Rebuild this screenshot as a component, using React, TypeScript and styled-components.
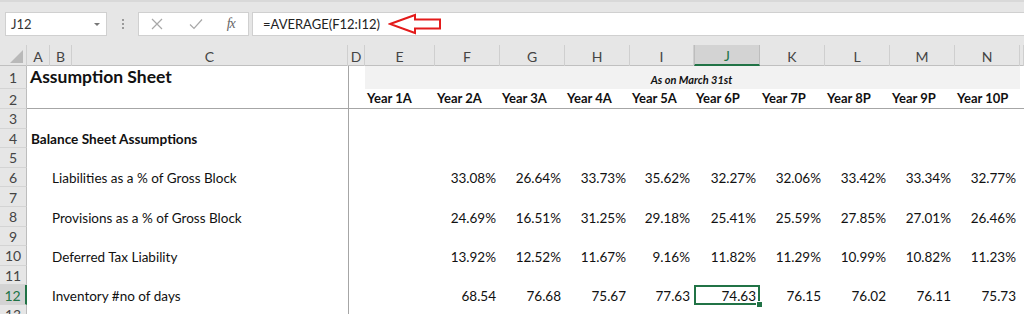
import React from "react";
import styled, { createGlobalStyle, css } from "styled-components";

const GREEN = "#217346";
const FONT = `Lato, "Noto Sans", sans-serif`;

const Global = createGlobalStyle`
  html, body { margin: 0; padding: 0; background: #fff; }
  body { font-family: ${FONT}; width: 1024px; height: 314px; overflow: hidden; }
`;

const COLS = "27px 23px 22px 276px 17px 70px 65px 65px 65px 64px 66px 65px 65px 65px 65px 1fr";

const Page = styled.div`
  width: 1024px;
  height: 314px;
  display: flex;
  flex-direction: column;
  overflow: hidden;
`;

/* ---------- formula bar ---------- */
const Toolbar = styled.div`
  flex: none;
  height: 45px;
  box-sizing: border-box;
  background: #e6e6e6;
  border-top: 2px solid #d9d9d9;
  display: flex;
  align-items: flex-start;
  padding: 10px 0 0 5px;
`;

const NameBox = styled.div`
  width: 102px;
  height: 24px;
  box-sizing: border-box;
  background: #fff;
  border: 1px solid #d0d0d0;
  display: flex;
  align-items: center;
  justify-content: space-between;
  padding: 0 6px 0 5px;
  font-size: 13px;
  color: #333;
`;

const Caret = styled.span`
  width: 0;
  height: 0;
  border-left: 3px solid transparent;
  border-right: 3px solid transparent;
  border-top: 3px solid #777;
`;

const Grip = styled.div`
  width: 31px;
  height: 24px;
  display: flex;
  flex-direction: column;
  align-items: center;
  justify-content: center;
  gap: 2px;
  & > span { width: 2px; height: 2px; background: #9a9a9a; }
`;

const ButtonBox = styled.div`
  width: 111px;
  height: 24px;
  box-sizing: border-box;
  background: #fff;
  border: 1px solid #d0d0d0;
  display: flex;
  align-items: center;
  padding-left: 12px;
`;

const IconSlot = styled.span`
  width: 37px;
  display: flex;
  align-items: center;
  justify-content: center;
  &:first-child { justify-content: flex-start; width: 30px; }
`;

const Fx = styled.span`
  font-family: "Liberation Serif", serif;
  font-style: italic;
  font-size: 14px;
  color: #666;
  letter-spacing: -1px;
`;

const FormulaBox = styled.div`
  position: relative;
  flex: 1;
  margin-left: 3px;
  height: 24px;
  box-sizing: border-box;
  background: #fff;
  border: 1px solid #d0d0d0;
  border-right: none;
  display: flex;
  align-items: center;
  padding-left: 10px;
  font-size: 13px;
  color: #222;
`;

const Arrow = styled.svg`
  position: absolute;
  left: 135px;
  top: 0px;
`;

/* ---------- sheet ---------- */
const Row = styled.div<{ $h: number; $ruled?: boolean }>`
  display: grid;
  grid-template-columns: ${COLS};
  height: ${(p) => p.$h}px;
  flex: none;
  ${(p) =>
    p.$ruled &&
    css`
      & > *:not(:first-child) { border-bottom: 1px solid #a6a6a6; }
    `}
`;

const HeaderRow = styled(Row)`
  background: #e6e6e6;
  border-bottom: 1px solid #c0c0c0;
  box-sizing: border-box;
`;

const Corner = styled.div`
  position: relative;
  border-right: 1px solid #cfcfcf;
  &::after {
    content: "";
    position: absolute;
    right: 3px;
    bottom: 3px;
    width: 0;
    height: 0;
    border-left: 13px solid transparent;
    border-bottom: 13px solid #b9b9b9;
  }
`;

const ColHead = styled.div<{ $sel?: boolean }>`
  display: flex;
  align-items: center;
  justify-content: center;
  font-size: 14px;
  color: #444;
  border-right: 1px solid #cfcfcf;
  box-sizing: border-box;
  padding-top: 2px;
  ${(p) =>
    p.$sel &&
    css`
      background: #d3d3d3;
      color: ${GREEN};
      border-bottom: 2px solid ${GREEN};
      border-right-color: #bdbdbd;
      border-left: 1px solid #bdbdbd;
    `}
`;

const RowHead = styled.div<{ $sel?: boolean }>`
  background: #e6e6e6;
  border-right: 1px solid #bdbdbd;
  border-bottom: 1px solid #d4d4d4;
  box-sizing: border-box;
  display: flex;
  align-items: center;
  justify-content: center;
  font-size: 14px;
  color: #444;
  padding-top: 1px;
  ${(p) =>
    p.$sel &&
    css`
      background: #d3d3d3;
      color: ${GREEN};
      border-right: 2px solid ${GREEN};
    `}
`;

const Cell = styled.div<{ $span?: number; $align?: "left" | "right" | "center"; $sel?: boolean }>`
  position: relative;
  grid-column: span ${(p) => p.$span ?? 1};
  display: flex;
  align-items: flex-end;
  justify-content: ${(p) => (p.$align === "right" ? "flex-end" : p.$align === "center" ? "center" : "flex-start")};
  padding: 0 4px 1px 2px;
  box-sizing: border-box;
  white-space: nowrap;
  font-size: 13.5px;
  color: #111;
  min-width: 0;
  ${(p) =>
    p.$sel &&
    css`
      outline: 2px solid ${GREEN};
      outline-offset: -2px;
    `}
`;

const Handle = styled.span`
  position: absolute;
  right: -3px;
  bottom: -3px;
  width: 5px;
  height: 5px;
  background: ${GREEN};
  border: 1px solid #fff;
`;

const DCell = styled.div`
  border-left: 1px solid #a6a6a6;
`;

const Title = styled(Cell)`
  font-size: 17.5px;
  font-weight: 700;
  padding-left: 3px;
  padding-bottom: 2px;
  overflow: visible;
`;

const Section = styled(Cell)`
  font-size: 13.6px;
  font-weight: 700;
  padding-left: 4px;
  overflow: visible;
`;

const Banner = styled(Cell)`
  background: #f2f2f2;
  font-size: 11px;
  font-weight: 700;
  font-style: italic;
  padding-bottom: 3px;
`;

const YearCell = styled(Cell)`
  font-size: 13px;
  font-weight: 700;
  padding-bottom: 2px;
`;

const Label = styled(Cell)`
  overflow: visible;
`;

const Body = styled.div`
  flex: none;
  display: flex;
  flex-direction: column;
`;

const letters = ["A", "B", "C", "D", "E", "F", "G", "H", "I", "J", "K", "L", "M", "N"];
const years = ["Year 1A", "Year 2A", "Year 3A", "Year 4A", "Year 5A", "Year 6P", "Year 7P", "Year 8P", "Year 9P", "Year 10P"];

const data: { row: number; label: string; values: string[] }[] = [
  { row: 6, label: "Liabilities as a % of Gross Block", values: ["33.08%", "26.64%", "33.73%", "35.62%", "32.27%", "32.06%", "33.42%", "33.34%", "32.77%"] },
  { row: 8, label: "Provisions as a % of Gross Block", values: ["24.69%", "16.51%", "31.25%", "29.18%", "25.41%", "25.59%", "27.85%", "27.01%", "26.46%"] },
  { row: 10, label: "Deferred Tax Liability", values: ["13.92%", "12.52%", "11.67%", "9.16%", "11.82%", "11.29%", "10.99%", "10.82%", "11.23%"] },
  { row: 12, label: "Inventory #no of days", values: ["68.54", "76.68", "75.67", "77.63", "74.63", "76.15", "76.02", "76.11", "75.73"] },
];

const RH = 19.6;

function EmptyRow({ n }: { n: number }) {
  return (
    <Row $h={RH}>
      <RowHead>{n}</RowHead>
      <Cell $span={3} />
      <DCell />
    </Row>
  );
}

function Cross() {
  return (
    <svg width="12" height="12" viewBox="0 0 12 12">
      <path d="M1 1 L11 11 M11 1 L1 11" stroke="#a8a8a8" strokeWidth="1.2" fill="none" />
    </svg>
  );
}

function Check() {
  return (
    <svg width="14" height="12" viewBox="0 0 14 12">
      <path d="M1 6.5 L5 10.5 L13 1.5" stroke="#a8a8a8" strokeWidth="1.2" fill="none" />
    </svg>
  );
}

export default function App() {
  const rows: React.ReactNode[] = [];
  rows.push(
    <Row key="r1" $h={23.4}>
      <RowHead>1</RowHead>
      <Title $span={3}>Assumption Sheet</Title>
      <DCell />
      <Banner $span={10} $align="center">As on March 31st</Banner>
    </Row>
  );
  rows.push(
    <Row key="r2" $h={19.6} $ruled>
      <RowHead>2</RowHead>
      <Cell $span={3} />
      <DCell />
      {years.map((y) => (
        <YearCell key={y}>{y}</YearCell>
      ))}
      <Cell />
    </Row>
  );
  rows.push(<EmptyRow key="r3" n={3} />);
  rows.push(
    <Row key="r4" $h={RH}>
      <RowHead>4</RowHead>
      <Section $span={3}>Balance Sheet Assumptions</Section>
      <DCell />
    </Row>
  );
  let r = 5;
  data.forEach((d) => {
    while (r < d.row) {
      rows.push(<EmptyRow key={"e" + r} n={r} />);
      r++;
    }
    rows.push(
      <Row key={"d" + d.row} $h={RH}>
        <RowHead $sel={d.row === 12}>{d.row}</RowHead>
        <Cell />
        <Label $span={2}>{d.label}</Label>
        <DCell />
        <Cell />
        {d.values.map((v, i) => {
          const sel = d.row === 12 && i === 4;
          return (
            <Cell key={i} $align="right" $sel={sel}>
              {v}
              {sel && <Handle />}
            </Cell>
          );
        })}
      </Row>
    );
    r++;
  });
  rows.push(<EmptyRow key="r13" n={13} />);

  return (
    <Page>
      <Global />
      <Toolbar>
        <NameBox>
          <span>J12</span>
          <Caret />
        </NameBox>
        <Grip>
          <span />
          <span />
          <span />
        </Grip>
        <ButtonBox>
          <IconSlot>
            <Cross />
          </IconSlot>
          <IconSlot>
            <Check />
          </IconSlot>
          <IconSlot>
            <Fx>fx</Fx>
          </IconSlot>
        </ButtonBox>
        <FormulaBox>
          =AVERAGE(F12:I12)
          <Arrow width="56" height="22" viewBox="0 0 56 22">
            <path
              d="M2 11 L27 2 L27 6.5 L52 6.5 L52 15.5 L27 15.5 L27 20 Z"
              fill="none"
              stroke="#e31b1b"
              strokeWidth="2"
              strokeLinejoin="miter"
            />
          </Arrow>
        </FormulaBox>
      </Toolbar>
      <HeaderRow $h={21}>
        <Corner />
        {letters.map((l) => (
          <ColHead key={l} $sel={l === "J"}>
            {l}
          </ColHead>
        ))}
        <ColHead />
      </HeaderRow>
      <Body>{rows}</Body>
    </Page>
  );
}
